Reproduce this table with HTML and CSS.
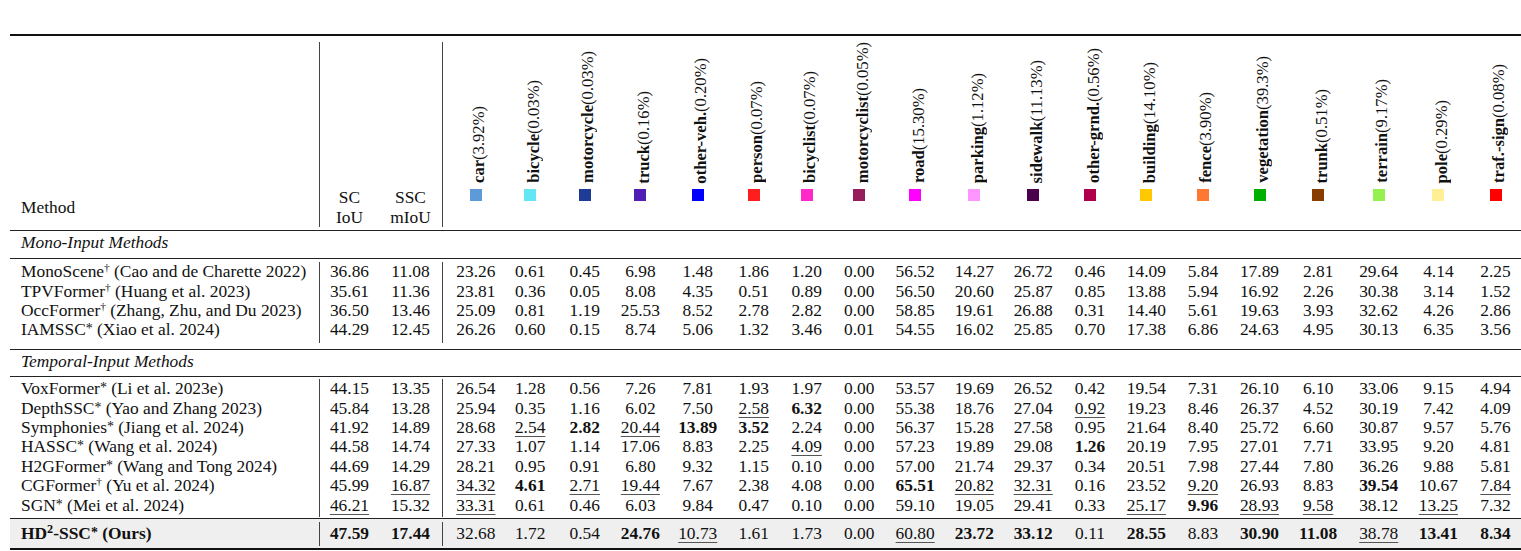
FILE: index.html
```html
<!DOCTYPE html>
<html lang="en">
<head>
<meta charset="utf-8">
<title>Results table</title>
<link rel="stylesheet" href="styles.css">
</head>
<body>
<table class="res">
<colgroup>
<col class="w-method"><col class="w-sc"><col class="w-ssc">
<col class="w-car"><col class="w-bicycle"><col class="w-motorcycle"><col class="w-truck"><col class="w-otherveh"><col class="w-person"><col class="w-bicyclist"><col class="w-motorcyclist"><col class="w-road"><col class="w-parking"><col class="w-sidewalk"><col class="w-othergrnd"><col class="w-building"><col class="w-fence"><col class="w-vegetation"><col class="w-trunk"><col class="w-terrain"><col class="w-pole"><col class="w-trafsign">
</colgroup>
<thead>
<tr class="gap g6"><td colspan="22"></td></tr>
<tr class="head">
<th class="method-h">Method</th>
<th class="metric vl">SC<br>IoU</th>
<th class="metric">SSC<br>mIoU</th>
<th class="cls vl first"><div class="hc"><span class="lab"><b>car</b>(3.92%)</span><i class="sq c-car"></i></div></th>
<th class="cls"><div class="hc"><span class="lab"><b>bicycle</b>(0.03%)</span><i class="sq c-bicycle"></i></div></th>
<th class="cls"><div class="hc"><span class="lab"><b>motorcycle</b>(0.03%)</span><i class="sq c-motorcycle"></i></div></th>
<th class="cls"><div class="hc"><span class="lab"><b>truck</b>(0.16%)</span><i class="sq c-truck"></i></div></th>
<th class="cls"><div class="hc"><span class="lab"><b>other-veh.</b>(0.20%)</span><i class="sq c-otherveh"></i></div></th>
<th class="cls"><div class="hc"><span class="lab"><b>person</b>(0.07%)</span><i class="sq c-person"></i></div></th>
<th class="cls"><div class="hc"><span class="lab"><b>bicyclist</b>(0.07%)</span><i class="sq c-bicyclist"></i></div></th>
<th class="cls"><div class="hc"><span class="lab"><b>motorcyclist</b>(0.05%)</span><i class="sq c-motorcyclist"></i></div></th>
<th class="cls"><div class="hc"><span class="lab"><b>road</b>(15.30%)</span><i class="sq c-road"></i></div></th>
<th class="cls"><div class="hc"><span class="lab"><b>parking</b>(1.12%)</span><i class="sq c-parking"></i></div></th>
<th class="cls"><div class="hc"><span class="lab"><b>sidewalk</b>(11.13%)</span><i class="sq c-sidewalk"></i></div></th>
<th class="cls"><div class="hc"><span class="lab"><b>other-grnd.</b>(0.56%)</span><i class="sq c-othergrnd"></i></div></th>
<th class="cls"><div class="hc"><span class="lab"><b>building</b>(14.10%)</span><i class="sq c-building"></i></div></th>
<th class="cls"><div class="hc"><span class="lab"><b>fence</b>(3.90%)</span><i class="sq c-fence"></i></div></th>
<th class="cls"><div class="hc"><span class="lab"><b>vegetation</b>(39.3%)</span><i class="sq c-vegetation"></i></div></th>
<th class="cls"><div class="hc"><span class="lab"><b>trunk</b>(0.51%)</span><i class="sq c-trunk"></i></div></th>
<th class="cls"><div class="hc"><span class="lab"><b>terrain</b>(9.17%)</span><i class="sq c-terrain"></i></div></th>
<th class="cls"><div class="hc"><span class="lab"><b>pole</b>(0.29%)</span><i class="sq c-pole"></i></div></th>
<th class="cls"><div class="hc"><span class="lab"><b>traf.-sign</b>(0.08%)</span><i class="sq c-trafsign"></i></div></th>
</tr>
<tr class="gap g3"><td colspan="22"></td></tr>
</thead>
<tbody>
<tr class="section s1"><td colspan="22">Mono-Input Methods</td></tr>
<tr class="gap g3"><td colspan="22"></td></tr>
<tr class="row"><td class="m">MonoScene<sup>†</sup> (Cao and de Charette 2022)</td><td class="vl">36.86</td><td>11.08</td><td class="vl first">23.26</td><td>0.61</td><td>0.45</td><td>6.98</td><td>1.48</td><td>1.86</td><td>1.20</td><td>0.00</td><td>56.52</td><td>14.27</td><td>26.72</td><td>0.46</td><td>14.09</td><td>5.84</td><td>17.89</td><td>2.81</td><td>29.64</td><td>4.14</td><td>2.25</td></tr>
<tr class="row"><td class="m">TPVFormer<sup>†</sup> (Huang et al. 2023)</td><td class="vl">35.61</td><td>11.36</td><td class="vl first">23.81</td><td>0.36</td><td>0.05</td><td>8.08</td><td>4.35</td><td>0.51</td><td>0.89</td><td>0.00</td><td>56.50</td><td>20.60</td><td>25.87</td><td>0.85</td><td>13.88</td><td>5.94</td><td>16.92</td><td>2.26</td><td>30.38</td><td>3.14</td><td>1.52</td></tr>
<tr class="row"><td class="m">OccFormer<sup>†</sup> (Zhang, Zhu, and Du 2023)</td><td class="vl">36.50</td><td>13.46</td><td class="vl first">25.09</td><td>0.81</td><td>1.19</td><td>25.53</td><td>8.52</td><td>2.78</td><td>2.82</td><td>0.00</td><td>58.85</td><td>19.61</td><td>26.88</td><td>0.31</td><td>14.40</td><td>5.61</td><td>19.63</td><td>3.93</td><td>32.62</td><td>4.26</td><td>2.86</td></tr>
<tr class="row last-a"><td class="m">IAMSSC<sup class="ast">*</sup> (Xiao et al. 2024)</td><td class="vl">44.29</td><td>12.45</td><td class="vl first">26.26</td><td>0.60</td><td>0.15</td><td>8.74</td><td>5.06</td><td>1.32</td><td>3.46</td><td>0.01</td><td>54.55</td><td>16.02</td><td>25.85</td><td>0.70</td><td>17.38</td><td>6.86</td><td>24.63</td><td>4.95</td><td>30.13</td><td>6.35</td><td>3.56</td></tr>
<tr class="gap g6"><td colspan="22"></td></tr>
<tr class="section s2"><td colspan="22">Temporal-Input Methods</td></tr>
<tr class="gap g2"><td colspan="22"></td></tr>
<tr class="row"><td class="m">VoxFormer<sup class="ast">*</sup> (Li et al. 2023e)</td><td class="vl">44.15</td><td>13.35</td><td class="vl first">26.54</td><td>1.28</td><td>0.56</td><td>7.26</td><td>7.81</td><td>1.93</td><td>1.97</td><td>0.00</td><td>53.57</td><td>19.69</td><td>26.52</td><td>0.42</td><td>19.54</td><td>7.31</td><td>26.10</td><td>6.10</td><td>33.06</td><td>9.15</td><td>4.94</td></tr>
<tr class="row"><td class="m">DepthSSC<sup class="ast">*</sup> (Yao and Zhang 2023)</td><td class="vl">45.84</td><td>13.28</td><td class="vl first">25.94</td><td>0.35</td><td>1.16</td><td>6.02</td><td>7.50</td><td><u>2.58</u></td><td><b>6.32</b></td><td>0.00</td><td>55.38</td><td>18.76</td><td>27.04</td><td><u>0.92</u></td><td>19.23</td><td>8.46</td><td>26.37</td><td>4.52</td><td>30.19</td><td>7.42</td><td>4.09</td></tr>
<tr class="row"><td class="m">Symphonies<sup class="ast">*</sup> (Jiang et al. 2024)</td><td class="vl">41.92</td><td>14.89</td><td class="vl first">28.68</td><td><u>2.54</u></td><td><b>2.82</b></td><td><u>20.44</u></td><td><b>13.89</b></td><td><b>3.52</b></td><td>2.24</td><td>0.00</td><td>56.37</td><td>15.28</td><td>27.58</td><td>0.95</td><td>21.64</td><td>8.40</td><td>25.72</td><td>6.60</td><td>30.87</td><td>9.57</td><td>5.76</td></tr>
<tr class="row"><td class="m">HASSC<sup class="ast">*</sup> (Wang et al. 2024)</td><td class="vl">44.58</td><td>14.74</td><td class="vl first">27.33</td><td>1.07</td><td>1.14</td><td>17.06</td><td>8.83</td><td>2.25</td><td><u>4.09</u></td><td>0.00</td><td>57.23</td><td>19.89</td><td>29.08</td><td><b>1.26</b></td><td>20.19</td><td>7.95</td><td>27.01</td><td>7.71</td><td>33.95</td><td>9.20</td><td>4.81</td></tr>
<tr class="row"><td class="m">H2GFormer<sup class="ast">*</sup> (Wang and Tong 2024)</td><td class="vl">44.69</td><td>14.29</td><td class="vl first">28.21</td><td>0.95</td><td>0.91</td><td>6.80</td><td>9.32</td><td>1.15</td><td>0.10</td><td>0.00</td><td>57.00</td><td>21.74</td><td>29.37</td><td>0.34</td><td>20.51</td><td>7.98</td><td>27.44</td><td>7.80</td><td>36.26</td><td>9.88</td><td>5.81</td></tr>
<tr class="row"><td class="m">CGFormer<sup>†</sup> (Yu et al. 2024)</td><td class="vl">45.99</td><td><u>16.87</u></td><td class="vl first"><u>34.32</u></td><td><b>4.61</b></td><td><u>2.71</u></td><td><u>19.44</u></td><td>7.67</td><td>2.38</td><td>4.08</td><td>0.00</td><td><b>65.51</b></td><td><u>20.82</u></td><td><u>32.31</u></td><td>0.16</td><td>23.52</td><td><u>9.20</u></td><td>26.93</td><td>8.83</td><td><b>39.54</b></td><td>10.67</td><td><u>7.84</u></td></tr>
<tr class="row last-b"><td class="m">SGN<sup class="ast">*</sup> (Mei et al. 2024)</td><td class="vl"><u>46.21</u></td><td>15.32</td><td class="vl first"><u>33.31</u></td><td>0.61</td><td>0.46</td><td>6.03</td><td>9.84</td><td>0.47</td><td>0.10</td><td>0.00</td><td>59.10</td><td>19.05</td><td>29.41</td><td>0.33</td><td><u>25.17</u></td><td><b>9.96</b></td><td><u>28.93</u></td><td><u>9.58</u></td><td>38.12</td><td><u>13.25</u></td><td>7.32</td></tr>
<tr class="gap g1"><td colspan="22"></td></tr>
<tr class="gap shade rule-top"><td colspan="22"></td></tr>
<tr class="ours"><td class="m"><b>HD<sup class="two">2</sup>-SSC<sup class="ast">*</sup> (Ours)</b></td><td class="vl"><b>47.59</b></td><td><b>17.44</b></td><td class="vl first">32.68</td><td>1.72</td><td>0.54</td><td><b>24.76</b></td><td><u>10.73</u></td><td>1.61</td><td>1.73</td><td>0.00</td><td><u>60.80</u></td><td><b>23.72</b></td><td><b>33.12</b></td><td>0.11</td><td><b>28.55</b></td><td>8.83</td><td><b>30.90</b></td><td><b>11.08</b></td><td><u>38.78</u></td><td><b>13.41</b></td><td><b>8.34</b></td></tr>
<tr class="gap shade g2"><td colspan="22"></td></tr>
</tbody>
</table>
</body>
</html>
```

FILE: styles.css
```css
html, body {
  margin: 0;
  padding: 0;
  overflow: hidden;
  background: #ffffff;
}

body {
  font-family: "Liberation Serif", "Times New Roman", serif;
  color: #111111;
}

.res {
  margin: 34px 0 0 10px;
  border-collapse: separate;
  border-spacing: 0;
  table-layout: fixed;
  width: 1513.5px;
  border-top: 2px solid #111111;
  border-bottom: 2px solid #111111;
  font-size: 17.4px;
  line-height: 19.4px;
}

.res td,
.res th {
  padding: 0;
  text-align: center;
  white-space: nowrap;
  font-weight: normal;
}

/* column widths */
.w-method { width: 309px; }
.w-sc { width: 60px; }
.w-ssc { width: 63px; }
.w-car { width: 60.75px; }
.w-bicycle { width: 54.75px; }
.w-motorcycle { width: 54.5px; }
.w-truck { width: 56.75px; }
.w-otherveh { width: 58px; }
.w-person { width: 54px; }
.w-bicyclist { width: 51.75px; }
.w-motorcyclist { width: 53.5px; }
.w-road { width: 58.25px; }
.w-parking { width: 60.25px; }
.w-sidewalk { width: 57.5px; }
.w-othergrnd { width: 56px; }
.w-building { width: 56.75px; }
.w-fence { width: 56.25px; }
.w-vegetation { width: 57px; }
.w-trunk { width: 60.25px; }
.w-terrain { width: 61px; }
.w-pole { width: 58.25px; }
.w-trafsign { width: 56px; }

/* spacer rows */
.gap td {
  font-size: 0;
  line-height: 0;
  padding: 0;
}
.g1 td { height: 1.2px; }
.g2 td { height: 2px; }
.g3 td { height: 3px; }
.g6 td { height: 6px; }

.vl { border-left: 1px solid #444444; }
.res .first { padding-left: 6px; }

/* header */
.head { height: 185px; }
.head th {
  vertical-align: bottom;
  line-height: 19.5px;
}
.res .method-h {
  text-align: left;
  padding-left: 11px;
  padding-bottom: 10px;
}
.res .cls { padding-bottom: 26px; }
.hc {
  display: flex;
  flex-direction: column;
  align-items: center;
}
.lab {
  writing-mode: vertical-rl;
  transform: rotate(180deg);
  font-size: 16.6px;
  line-height: 16px;
  margin-bottom: 6px;
  margin-left: 7px;
  white-space: nowrap;
}
.lab b { font-weight: bold; }
.sq {
  display: block;
  width: 12px;
  height: 12px;
}
.c-car { background: #5e9ad8; }
.c-bicycle { background: #64e6f5; }
.c-motorcycle { background: #1e3c96; }
.c-truck { background: #501eb4; }
.c-otherveh { background: #0000ff; }
.c-person { background: #ff1e1e; }
.c-bicyclist { background: #ff28c8; }
.c-motorcyclist { background: #961e5a; }
.c-road { background: #ff00ff; }
.c-parking { background: #ff96ff; }
.c-sidewalk { background: #4b004b; }
.c-othergrnd { background: #af004b; }
.c-building { background: #ffc800; }
.c-fence { background: #ff7832; }
.c-vegetation { background: #00af00; }
.c-trunk { background: #873c00; }
.c-terrain { background: #96f050; }
.c-pole { background: #fff096; }
.c-trafsign { background: #ff0000; }

/* section rows */
.res .section td {
  text-align: left;
  font-style: italic;
  line-height: 19.5px;
  padding: 2px 0 5.5px 11px;
  border-top: 1px solid #222222;
  border-bottom: 1px solid #222222;
}
.res .section.s2 td { padding-bottom: 4.5px; }

/* data rows */
.row td { line-height: 19.4px; }
.res td.m {
  text-align: left;
  padding-left: 11px;
}
.res .last-a td { padding-bottom: 3.4px; }
.res .last-b td { padding-bottom: 2px; }

sup {
  font-size: 0.65em;
  line-height: 0;
  vertical-align: 0.5em;
}
sup.ast {
  font-size: 0.8em;
  vertical-align: 0.15em;
}
sup.two {
  font-size: 0.7em;
  vertical-align: 0.5em;
}

b { font-weight: bold; }
u {
  text-decoration: underline;
  text-decoration-thickness: 1px;
  text-underline-offset: 3px;
  text-decoration-color: #555555;
}

/* ours row */
.shade td { background: #efefef; }
.rule-top td {
  height: 3px;
  border-top: 1px solid #222222;
}
.ours td {
  background: #efefef;
  line-height: 19.5px;
  padding-top: 2.25px;
  padding-bottom: 2.25px;
}
```
